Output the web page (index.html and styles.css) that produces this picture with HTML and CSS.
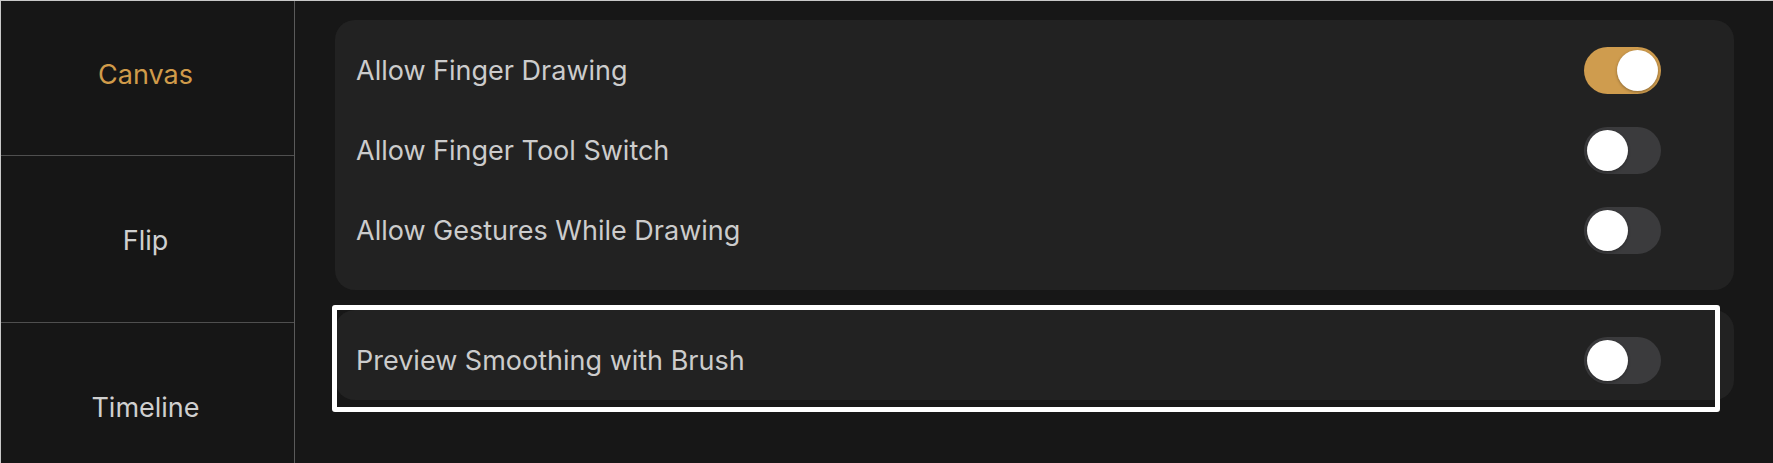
FILE: index.html
```html
<!DOCTYPE html>
<html lang="en">
<head>
<meta charset="utf-8">
<title>Settings</title>
<link rel="stylesheet" href="styles.css">
</head>
<body>
<div class="app">
  <aside class="sidebar">
    <div class="nav-item nav-first active">Canvas</div>
    <div class="nav-item nav-mid">Flip</div>
    <div class="nav-item nav-last">Timeline</div>
  </aside>
  <main class="content">
    <section class="card card-group">
      <div class="row">
        <span class="label">Allow Finger Drawing</span>
        <span class="toggle on"><span class="knob"></span></span>
      </div>
      <div class="row">
        <span class="label">Allow Finger Tool Switch</span>
        <span class="toggle"><span class="knob"></span></span>
      </div>
      <div class="row">
        <span class="label">Allow Gestures While Drawing</span>
        <span class="toggle"><span class="knob"></span></span>
      </div>
    </section>
    <section class="card card-single">
      <div class="row">
        <span class="label">Preview Smoothing with Brush</span>
        <span class="toggle"><span class="knob"></span></span>
      </div>
      <div class="highlight"></div>
    </section>
  </main>
</div>
</body>
</html>
```

FILE: styles.css
```css
html, body {
  margin: 0;
  padding: 0;
  background: #171717;
}

body {
  font-family: Inter, "Noto Sans", "Liberation Sans", sans-serif;
  -webkit-font-smoothing: antialiased;
}

.app {
  display: flex;
  width: 1773px;
  height: 463px;
  box-sizing: border-box;
  border-top: 1px solid #c8c8c8;
  border-left: 1px solid #c8c8c8;
  overflow: hidden;
}

.sidebar {
  width: 293px;
  flex: none;
  background: #161616;
  border-right: 1px solid #5a5a5a;
  display: flex;
  flex-direction: column;
}

.nav-item {
  display: flex;
  align-items: center;
  justify-content: center;
  font-size: 27px;
  color: #cfcfcf;
  padding-right: 4px;
  box-sizing: border-box;
  flex: none;
}

.nav-item.active {
  color: #d09b4a;
}

.nav-first {
  height: 155px;
  border-bottom: 1px solid #4f4f4f;
  padding-bottom: 8px;
}

.nav-mid {
  height: 167px;
  border-bottom: 1px solid #4f4f4f;
  padding-top: 2px;
}

.nav-last {
  height: 166px;
  padding-top: 2px;
}

.content {
  flex: 1;
  padding: 19px 39px 0 40px;
  display: flex;
  flex-direction: column;
  gap: 20px;
}

.card {
  background: #222222;
  border-radius: 20px;
  padding-left: 21px;
  padding-right: 73px;
}

.card-group {
  padding-top: 10px;
  padding-bottom: 20px;
}

.card-single {
  position: relative;
  padding-top: 10px;
}

.row {
  height: 80px;
  display: flex;
  align-items: center;
  justify-content: space-between;
}

.label {
  font-size: 27px;
  color: #cccccc;
}

.toggle {
  position: relative;
  width: 77px;
  height: 47px;
  border-radius: 24px;
  background: #3b3b3d;
  flex: none;
}

.toggle.on {
  background: #cf9c4e;
}

.knob {
  position: absolute;
  top: 3px;
  left: 3px;
  width: 41px;
  height: 41px;
  border-radius: 50%;
  background: #ffffff;
  box-shadow: 0 1px 3px rgba(0, 0, 0, 0.35);
}

.toggle.on .knob {
  left: 33px;
}

.highlight {
  position: absolute;
  left: -3px;
  top: -5px;
  right: 14px;
  bottom: -12px;
  border: 5px solid #ffffff;
  border-radius: 3px;
  pointer-events: none;
}
```
